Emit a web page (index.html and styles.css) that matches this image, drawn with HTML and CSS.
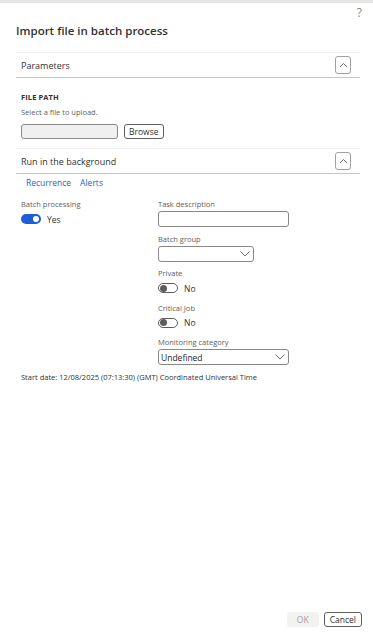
FILE: index.html
```html
<!DOCTYPE html>
<html>
<head>
<meta charset="utf-8">
<link rel="stylesheet" href="styles.css">
</head>
<body>
<div class="topbar"></div>
<div class="dialog">
  <div class="help">?</div>
  <h1 class="title">Import file in batch process</h1>

  <div class="section-head first">
    <span>Parameters</span>
    <button class="collapse"><svg width="9" height="6" viewBox="0 0 9 6"><path d="M1 5 L4.5 1.5 L8 5" fill="none" stroke="#605e5c" stroke-width="0.9"/></svg></button>
  </div>
  <div class="section-body">
    <div class="group-title">FILE PATH</div>
    <div class="hint">Select a file to upload.</div>
    <div class="upload-row">
      <div class="file-input"></div>
      <button class="btn">Browse</button>
    </div>
  </div>

  <div class="section-head">
    <span>Run in the background</span>
    <button class="collapse"><svg width="9" height="6" viewBox="0 0 9 6"><path d="M1 5 L4.5 1.5 L8 5" fill="none" stroke="#605e5c" stroke-width="0.9"/></svg></button>
  </div>
  <div class="tabs">
    <span class="link">Recurrence</span>
    <span class="link">Alerts</span>
  </div>
  <div class="cols">
    <div class="col left">
      <div class="field">
        <div class="label">Batch processing</div>
        <div class="toggle-row"><span class="toggle on"><span class="knob"></span></span><span class="tval">Yes</span></div>
      </div>
    </div>
    <div class="col right">
      <div class="field">
        <div class="label">Task description</div>
        <div class="input wide"></div>
      </div>
      <div class="field">
        <div class="label">Batch group</div>
        <div class="input select mid"><span></span><svg width="10" height="6" viewBox="0 0 10 6"><path d="M0.5 0.5 L5 5 L9.5 0.5" fill="none" stroke="#605e5c" stroke-width="0.9"/></svg></div>
      </div>
      <div class="field">
        <div class="label">Private</div>
        <div class="toggle-row"><span class="toggle off"><span class="knob"></span></span><span class="tval">No</span></div>
      </div>
      <div class="field">
        <div class="label">Critical Job</div>
        <div class="toggle-row"><span class="toggle off"><span class="knob"></span></span><span class="tval">No</span></div>
      </div>
      <div class="field">
        <div class="label">Monitoring category</div>
        <div class="input select wide"><span class="val">Undefined</span><svg width="10" height="6" viewBox="0 0 10 6"><path d="M0.5 0.5 L5 5 L9.5 0.5" fill="none" stroke="#605e5c" stroke-width="0.9"/></svg></div>
      </div>
    </div>
  </div>
  <div class="start">Start date: 12/08/2025 (07:13:30) (GMT) Coordinated Universal Time</div>

  <div class="footer">
    <button class="btn ok" disabled>OK</button>
    <button class="btn cancel">Cancel</button>
  </div>
</div>
</body>
</html>
```

FILE: styles.css
```css
* { box-sizing: border-box; }
html, body { margin: 0; padding: 0; background: #fff; }
body {
  font-family: "Open Sans", "Noto Sans", sans-serif;
  color: #323130;
  height: 639px;
  display: flex;
  flex-direction: column;
}
.topbar { height: 3px; background: #e4e4e4; flex: none; }
.dialog {
  flex: 1;
  display: flex;
  flex-direction: column;
  padding: 0 13px 0 16px;
}
.help {
  align-self: flex-end;
  font-size: 12px;
  color: #8a8886;
  line-height: 14px;
  margin: 3px -2px 0 0;
}
.title {
  margin: 3px 0 0 0;
  font-size: 11.5px;
  font-weight: 600;
  line-height: 16px;
  color: #323130;
}
.section-head {
  display: flex;
  align-items: center;
  justify-content: space-between;
  height: 26px;
  border-top: 1px solid #f2f2f2;
  border-bottom: 1px solid #c8c6c4;
  padding: 0 9px 0 5px;
  font-size: 9px;
}
.section-head.first { margin-top: 13px; }
.collapse {
  width: 16px;
  height: 18px;
  border: 1px solid #a19f9d;
  border-radius: 3px;
  background: #fff;
  padding: 0;
  display: flex;
  align-items: center;
  justify-content: center;
}
.section-body { padding: 14px 5px 9px; }
.group-title { font-size: 7.5px; font-weight: 700; letter-spacing: 0.1px; line-height: 10px; }
.hint { font-size: 7.5px; color: #605e5c; margin-top: 5px; line-height: 10px; }
.upload-row { display: flex; gap: 6px; margin-top: 7px; }
.file-input {
  width: 97px; height: 15px;
  background: #f0f0f0;
  border: 1px solid #8a8886;
  border-radius: 3px;
}
.btn {
  font-family: inherit;
  font-size: 8.5px;
  color: #323130;
  background: #fff;
  border: 1px solid #605e5c;
  border-radius: 3px;
  height: 15px;
  padding: 0 4px;
  line-height: 13px;
}
.tabs { display: flex; gap: 9px; padding: 3px 10px 0; font-size: 8.5px; line-height: 12px; }
.link { color: #2266c8; }
.cols { display: flex; padding: 10px 5px 0; }
.col.left { width: 137px; }
.col.right { flex: 1; }
.field { margin-bottom: 6.5px; }
.label { font-size: 7.5px; color: #605e5c; line-height: 11px; }
.input {
  height: 16px;
  border: 1px solid #8a8886;
  border-radius: 3px;
  margin-top: 1px;
  display: flex;
  align-items: center;
  justify-content: space-between;
  padding: 0 3px 0 2px;
}
.input.wide { width: 131px; }
.input.mid { width: 96px; }
.val { font-size: 8.5px; color: #201f1e; }
.toggle-row { display: flex; align-items: center; gap: 6px; margin-top: 1px; height: 16px; }
.toggle {
  width: 20px; height: 10px;
  border-radius: 5px;
  display: flex;
  align-items: center;
  padding: 0 2px;
}
.toggle.on { background: #1d5fd6; justify-content: flex-end; }
.toggle.off { border: 1px solid #605e5c; background: #fff; justify-content: flex-start; padding: 0 1px; }
.knob { width: 6px; height: 6px; border-radius: 50%; background: #fff; }
.toggle.off .knob { background: #605e5c; width: 7px; height: 7px; }
.tval { font-size: 8.5px; }
.start { font-size: 7.5px; color: #323130; padding: 0 5px; }
.footer {
  margin-top: auto;
  display: flex;
  justify-content: flex-end;
  gap: 5px;
  padding: 0 0 12px;
}
.ok { background: #f3f2f1; border-color: #f3f2f1; color: #a19f9d; width: 32px; }
.cancel { padding: 0 5px; margin-right: -2px; }
```
